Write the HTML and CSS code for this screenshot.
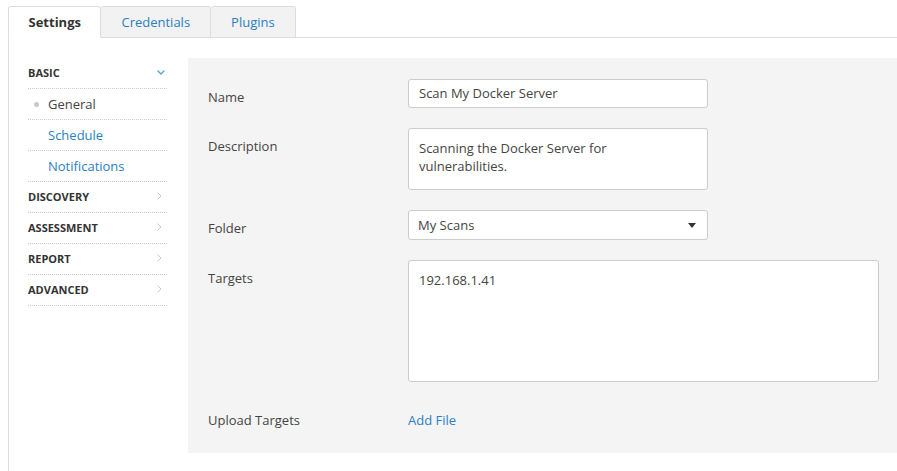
FILE: index.html
```html
<!DOCTYPE html>
<html lang="en">
<head>
    <meta charset="UTF-8">
    <meta name="viewport" content="width=device-width, initial-scale=1.0">
    <title>Scan Settings</title>
    <link rel="stylesheet" href="styles.css">
</head>
<body>
    <div class="tabs">
        <div class="tab active">Settings</div>
        <div class="tab">Credentials</div>
        <div class="tab">Plugins</div>
    </div>

    <div class="tab-body">
        <div class="sidebar">
            <div class="side-head">
                <span>Basic</span>
                <svg class="chev-down" width="8" height="5" viewBox="0 0 8 5"><polyline points="0.5,0.5 4,4 7.5,0.5" fill="none" stroke="#4fa9cf" stroke-width="1.3"/></svg>
            </div>
            <div class="side-item current"><span class="bullet"></span>General</div>
            <div class="side-item">Schedule</div>
            <div class="side-item">Notifications</div>
            <div class="side-head">
                <span>Discovery</span>
                <svg class="chev-right" width="5" height="8" viewBox="0 0 5 8"><polyline points="0.5,0.5 4,4 0.5,7.5" fill="none" stroke="#cccccc" stroke-width="1"/></svg>
            </div>
            <div class="side-head">
                <span>Assessment</span>
                <svg class="chev-right" width="5" height="8" viewBox="0 0 5 8"><polyline points="0.5,0.5 4,4 0.5,7.5" fill="none" stroke="#cccccc" stroke-width="1"/></svg>
            </div>
            <div class="side-head">
                <span>Report</span>
                <svg class="chev-right" width="5" height="8" viewBox="0 0 5 8"><polyline points="0.5,0.5 4,4 0.5,7.5" fill="none" stroke="#cccccc" stroke-width="1"/></svg>
            </div>
            <div class="side-head">
                <span>Advanced</span>
                <svg class="chev-right" width="5" height="8" viewBox="0 0 5 8"><polyline points="0.5,0.5 4,4 0.5,7.5" fill="none" stroke="#cccccc" stroke-width="1"/></svg>
            </div>
        </div>

        <div class="panel">
            <div class="row">
                <label class="label">Name</label>
                <input class="field" type="text" value="Scan My Docker Server">
            </div>
            <div class="row">
                <label class="label">Description</label>
                <textarea class="field desc">Scanning the Docker Server for vulnerabilities.</textarea>
            </div>
            <div class="row">
                <label class="label">Folder</label>
                <div class="select-wrap">
                    <select class="field select">
                        <option>My Scans</option>
                    </select>
                </div>
            </div>
            <div class="row">
                <label class="label">Targets</label>
                <textarea class="field targets">192.168.1.41</textarea>
            </div>
            <div class="row">
                <label class="label">Upload Targets</label>
                <a class="link" href="#">Add File</a>
            </div>
        </div>
    </div>
</body>
</html>
```

FILE: styles.css
```css
body {
    margin: 0;
    padding: 6px 0 0 8px;
    font-family: "Open Sans", "Liberation Sans", sans-serif;
    font-size: 13px;
    color: #444;
    background-color: #fff;
}
.tabs {
    display: flex;
    border-bottom: 1px solid #ddd;
}
.tab {
    height: 30px;
    line-height: 30px;
    padding: 0 20px;
    margin-bottom: -1px;
    border: 1px solid #ddd;
    border-left: none;
    border-radius: 3px 3px 0 0;
    background-color: #f2f2f2;
    color: #2a7fc2;
}
.tab:first-child {
    border-left: 1px solid #ddd;
}
.tab.active {
    padding: 0 19.5px;
    background-color: #fff;
    border-bottom-color: #fff;
    color: #333;
    font-weight: bold;
}
.tab-body {
    display: flex;
    gap: 21px;
    border-left: 1px solid #ddd;
    padding: 20px 0 40px 19px;
}
.sidebar {
    width: 139px;
    flex-shrink: 0;
}
.side-head, .side-item {
    box-sizing: border-box;
    height: 31px;
    display: flex;
    align-items: center;
    border-bottom: 1px dotted #ccc;
}
.side-head {
    justify-content: space-between;
    font-size: 11px;
    font-weight: bold;
    text-transform: uppercase;
    color: #333;
    padding: 0 2px 2px 0;
}
.chev-right {
    margin-right: 3px;
}
.side-item {
    padding-left: 20px;
    color: #2a7fc2;
    position: relative;
}
.side-item.current {
    color: #444;
}
.bullet {
    position: absolute;
    left: 6px;
    top: 13px;
    width: 5px;
    height: 5px;
    border-radius: 50%;
    background-color: #c8c8c8;
}
.panel {
    flex: 1;
    background-color: #f4f4f4;
    padding: 21px 18px 24px 20px;
}
.row {
    display: flex;
    align-items: flex-start;
    margin-bottom: 20px;
}
.row:last-child {
    margin-bottom: 0;
}
.label {
    width: 200px;
    flex-shrink: 0;
    padding-top: 9px;
    line-height: 18px;
}
.field {
    box-sizing: border-box;
    width: 300px;
    height: 29px;
    padding: 0 10px 1px;
    border: 1px solid #ccc;
    border-radius: 3px;
    background-color: #fff;
    font-family: inherit;
    font-size: 13px;
    color: #444;
    outline: none;
}
textarea.field {
    padding: 10px 20px 10px 10px;
    line-height: 18px;
    resize: none;
    overflow: hidden;
}
.desc {
    height: 62px;
}
.targets {
    flex: 1;
    height: 122px;
}
.select-wrap {
    position: relative;
    width: 300px;
}
.select {
    height: 30px;
    padding: 0 9px;
    appearance: none;
    -webkit-appearance: none;
}
.select-wrap::after {
    content: "";
    position: absolute;
    right: 12px;
    top: 13px;
    border-left: 4px solid transparent;
    border-right: 4px solid transparent;
    border-top: 5px solid #333;
}
.link {
    padding-top: 9px;
    line-height: 18px;
    color: #2a7fc2;
    text-decoration: none;
}
```
